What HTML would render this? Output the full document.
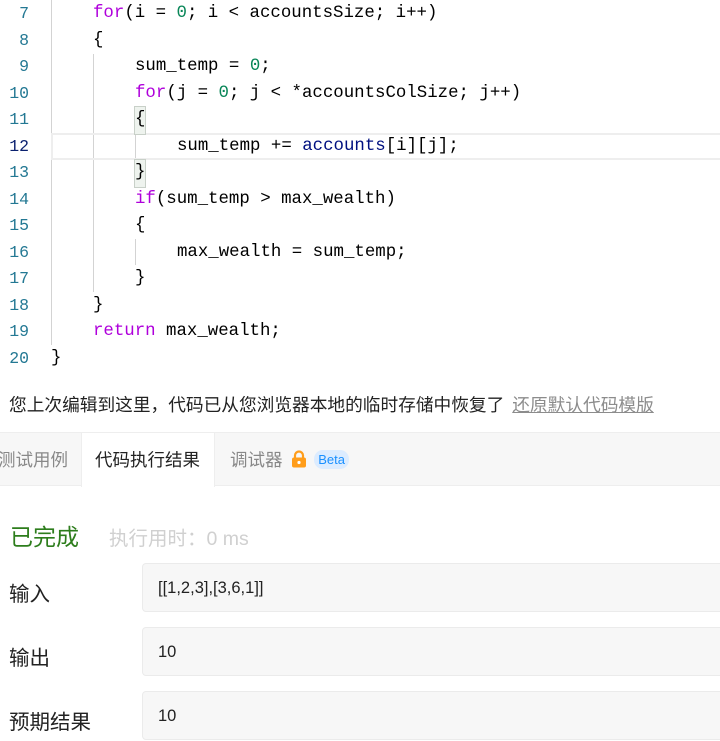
<!DOCTYPE html>
<html><head><meta charset="utf-8"><style>
*{margin:0;padding:0;box-sizing:border-box}
body{width:720px;height:741px;overflow:hidden;background:#fff;font-family:"Liberation Sans","Noto Sans CJK SC",sans-serif;position:relative}
.code{position:absolute;left:0;top:0;width:720px;height:372px;font-family:"Liberation Mono","DejaVu Sans Mono",monospace;font-size:17.4px;color:#000}
.ln{position:absolute;left:0;width:29px;text-align:right;color:#237893;height:26.5px;line-height:26.5px;font-size:16.5px}
.l{position:absolute;height:26.5px;line-height:26.5px;white-space:pre}
.k{color:#af00db}.n{color:#098658}.v{color:#001080}
.g{position:absolute;width:1px;background:#d3d3d3}
.cur{position:absolute;left:51px;top:133px;width:669px;height:27px;border:2px solid #eeeeee;border-right:none}
.msg{position:absolute;left:9px;top:391px;font-size:17.7px;color:#222}
.msg a{color:#8c8c8c;text-decoration:underline;margin-left:8px}
.tabs{position:absolute;left:0;top:432px;width:720px;height:54px;background:#f7f7f7;border-top:1px solid #eee;border-bottom:1px solid #eee}
.tab{position:absolute;top:0;height:53px;line-height:54px;font-size:17.5px;color:#888}
.act{background:#fff;color:#222;border-left:1px solid #eee;border-right:1px solid #eee;height:54px}
.beta{display:inline-block;background:#dcecff;color:#1a90ff;font-size:13px;line-height:19px;padding:0 4px;border-radius:9px;vertical-align:middle;margin-top:-3px}
.done{position:absolute;left:10px;top:518px;font-size:23px;color:#2d7d1c}
.time{position:absolute;left:109px;top:522px;font-size:19.5px;color:#d0d0d0}
.lab{position:absolute;left:9px;font-size:20.5px;color:#222}
.box{position:absolute;left:142px;width:590px;height:49px;background:#f7f7f7;border:1px solid #ebebeb;border-radius:4px;font-size:16.5px;color:#222;padding:15px 0 0 15px}
</style></head><body>
<div class="code">
<div class="g" style="left:51px;top:0;height:345px"></div>
<div class="g" style="left:93px;top:54px;height:238px"></div>
<div class="g" style="left:135px;top:134px;height:26px"></div>
<div class="g" style="left:135px;top:239px;height:26px"></div>
<div class="cur"></div>
<div class="ln" style="top:1px">7</div><div class="l" style="left:93px;top:1px"><span class="k">for</span>(i = <span class="n">0</span>; i &lt; accountsSize; i++)</div>
<div class="ln" style="top:27.5px">8</div><div class="l" style="left:93px;top:27.5px">{</div>
<div class="ln" style="top:54px">9</div><div class="l" style="left:135px;top:54px">sum_temp = <span class="n">0</span>;</div>
<div class="ln" style="top:80.5px">10</div><div class="l" style="left:135px;top:80.5px"><span class="k">for</span>(j = <span class="n">0</span>; j &lt; *accountsColSize; j++)</div>
<div class="ln" style="top:107px">11</div><div class="l" style="left:135px;top:107px;background:#eef3ee;outline:1px solid #c8d0c8">{</div>
<div class="ln" style="top:133.5px;color:#0b216f">12</div><div class="l" style="left:177px;top:133.5px">sum_temp += <span class="v">accounts</span>[i][j];</div>
<div class="ln" style="top:160px">13</div><div class="l" style="left:135px;top:160px;background:#eef3ee;outline:1px solid #c8d0c8">}</div>
<div class="ln" style="top:186.5px">14</div><div class="l" style="left:135px;top:186.5px"><span class="k">if</span>(sum_temp &gt; max_wealth)</div>
<div class="ln" style="top:213px">15</div><div class="l" style="left:135px;top:213px">{</div>
<div class="ln" style="top:239.5px">16</div><div class="l" style="left:177px;top:239.5px">max_wealth = sum_temp;</div>
<div class="ln" style="top:266px">17</div><div class="l" style="left:135px;top:266px">}</div>
<div class="ln" style="top:292.5px">18</div><div class="l" style="left:93px;top:292.5px">}</div>
<div class="ln" style="top:319px">19</div><div class="l" style="left:93px;top:319px"><span class="k">return</span> max_wealth;</div>
<div class="ln" style="top:345.5px">20</div><div class="l" style="left:51px;top:345.5px">}</div>
</div>
<div class="msg">您上次编辑到这里，代码已从您浏览器本地的临时存储中恢复了<a>还原默认代码模版</a></div>
<div class="tabs">
<div class="tab" style="left:-2px;">测试用例</div>
<div class="tab act" style="left:81px;width:134px;padding-left:13px">代码执行结果</div>
<div class="tab" style="left:230px">调试器 <svg width="16" height="18" viewBox="0 0 16 18" style="vertical-align:middle;margin:-4px 2px 0 4px"><path d="M4 8V5.5a4 4 0 0 1 8 0V8" fill="none" stroke="#ff9d1a" stroke-width="2.2"/><rect x="1" y="7.5" width="14" height="10" rx="2" fill="#ff9d1a"/><circle cx="8" cy="12.5" r="1.6" fill="#fff"/></svg> <span class="beta">Beta</span></div>
</div>
<div class="done">已完成</div>
<div class="time">执行用时：0 ms</div>
<div class="lab" style="top:577px">输入</div>
<div class="box" style="top:563px">[[1,2,3],[3,6,1]]</div>
<div class="lab" style="top:641px">输出</div>
<div class="box" style="top:627px">10</div>
<div class="lab" style="top:705px">预期结果</div>
<div class="box" style="top:691px">10</div>
</body></html>
